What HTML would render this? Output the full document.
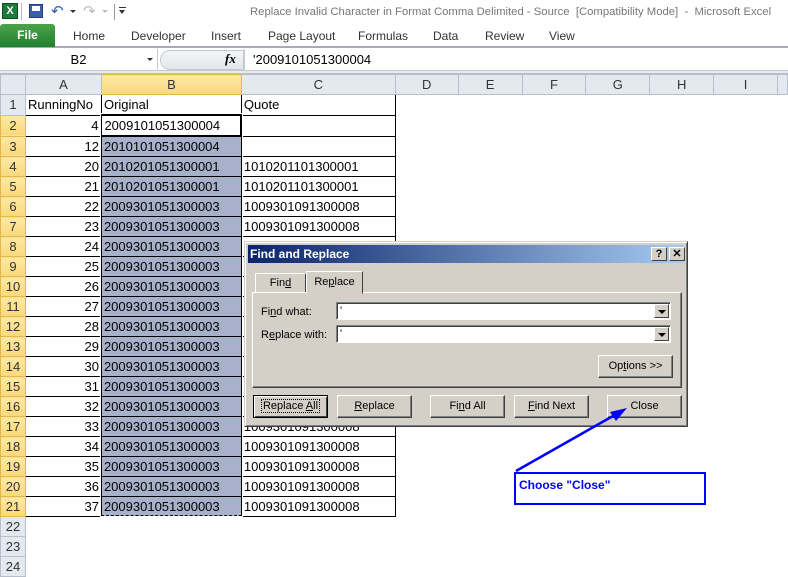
<!DOCTYPE html>
<html><head><meta charset="utf-8"><style>
*{margin:0;padding:0;box-sizing:border-box}
body{width:788px;height:569px;overflow:hidden;background:#fff;font-family:"Liberation Sans",sans-serif;position:relative}
.abs{position:absolute}
#grid{position:absolute;left:0;top:74px;border-collapse:collapse;table-layout:fixed;font-size:13px}
#grid td{height:20px;padding:0 2px;white-space:nowrap;overflow:hidden;line-height:19px}
#grid tr.h td{background:#e4e8ef;border:1px solid #b7bfcc;text-align:center;color:#333;font-size:13px}
#grid td.rh{background:#e4e8ef;border:1px solid #b7bfcc;text-align:center;color:#333}
#grid td.rs{background:linear-gradient(#fde9a4,#f9d87a);border:1px solid #e2b84f;color:#333;text-align:center}
#grid td.c{border:1px solid #000}
#grid td.n{text-align:right}
#grid td.s{background:#a7b1c9}
.btn{position:absolute;height:23px;background:#d4d0c8;border:1px solid;border-color:#fff #404040 #404040 #fff;box-shadow:inset -1px -1px #808080;font-size:11px;text-align:center;line-height:21px;color:#000}
.inp{position:absolute;height:18px;background:#fff;border:1px solid;border-color:#808080 #fff #fff #808080;box-shadow:inset 1px 1px #404040;font-size:11px;padding-left:3px;line-height:16px}
.dd{position:absolute;right:1px;top:1px;width:15px;height:14px;background:#d4d0c8;border:1px solid;border-color:#fff #404040 #404040 #fff}
.dd:after{content:"";position:absolute;left:3px;top:5px;border-left:4px solid transparent;border-right:4px solid transparent;border-top:4px solid #000}
</style></head><body>
<div class="abs" style="left:0;top:0;width:788px;height:24px;background:#fff"></div>
<div class="abs" style="left:2px;top:3px;width:16px;height:16px;background:#1e7a3a;border:1px solid #0d4f22;color:#fff;font-size:11px;font-weight:bold;text-align:center;line-height:14px">X</div>
<div class="abs" style="left:21px;top:3px;width:1px;height:17px;background:#bbb"></div>
<div class="abs" style="left:29px;top:4px;width:14px;height:14px;background:#3c5fa8;border:1px solid #23407a"><div style="margin:1px 2px;height:5px;background:#fff"></div></div>
<div class="abs" style="left:51px;top:2px;font-size:15px;color:#2d5bb0">&#8630;</div>
<div class="abs" style="left:70px;top:10px;border-left:3px solid transparent;border-right:3px solid transparent;border-top:3px solid #333"></div>
<div class="abs" style="left:83px;top:2px;font-size:15px;color:#bbb">&#8631;</div>
<div class="abs" style="left:102px;top:10px;border-left:3px solid transparent;border-right:3px solid transparent;border-top:3px solid #bbb"></div>
<div class="abs" style="left:114px;top:4px;width:1px;height:16px;background:#999"></div>
<div class="abs" style="left:119px;top:7px;width:7px;height:1px;background:#333"></div>
<div class="abs" style="left:119px;top:10px;border-left:3.5px solid transparent;border-right:3.5px solid transparent;border-top:4px solid #333"></div>
<div class="abs" style="left:250px;top:6px;font-size:11.3px;color:#777;white-space:nowrap">Replace Invalid Character in Format Comma Delimited - Source&nbsp; [Compatibility Mode]&nbsp; - &nbsp;Microsoft Excel</div>
<div class="abs" style="left:0;top:24px;width:788px;height:24px;background:#fff;border-bottom:2px solid #a8acb2"></div>
<div class="abs" style="left:0;top:24px;width:55px;height:23px;background:linear-gradient(#4ca24a,#21802f);border-radius:3px 3px 0 0;color:#fff;font-size:12px;font-weight:bold;text-align:center;line-height:23px">File</div>
<div class="abs" style="top:29px;left:73px;font-size:12px;color:#333">Home</div>
<div class="abs" style="top:29px;left:131px;font-size:12px;color:#333">Developer</div>
<div class="abs" style="top:29px;left:211px;font-size:12px;color:#333">Insert</div>
<div class="abs" style="top:29px;left:268px;font-size:12px;color:#333">Page Layout</div>
<div class="abs" style="top:29px;left:358px;font-size:12px;color:#333">Formulas</div>
<div class="abs" style="top:29px;left:433px;font-size:12px;color:#333">Data</div>
<div class="abs" style="top:29px;left:485px;font-size:12px;color:#333">Review</div>
<div class="abs" style="top:29px;left:549px;font-size:12px;color:#333">View</div>
<div class="abs" style="left:0;top:49px;width:788px;height:22px;background:#fff;border-bottom:1px solid #c5c9cf"></div>
<div class="abs" style="left:0;top:49px;width:158px;height:21px;border-right:1px solid #c5c9cf;font-size:13px;text-align:center;line-height:21px;color:#000">B2</div>
<div class="abs" style="left:147px;top:58px;border-left:3px solid transparent;border-right:3px solid transparent;border-top:3px solid #333"></div>
<div class="abs" style="left:160px;top:50px;width:84px;height:20px;background:linear-gradient(#f4f5f7,#e3e6ea);border-radius:10px 0 0 10px;border:1px solid #c5c9cf"></div>
<div class="abs" style="left:225px;top:51px;font-family:'Liberation Serif',serif;font-style:italic;font-weight:bold;font-size:13px">fx</div>
<div class="abs" style="left:244px;top:49px;width:1px;height:21px;background:#c5c9cf"></div>
<div class="abs" style="left:253px;top:52px;font-size:13px">'2009101051300004</div>
<div class="abs" style="left:0;top:71px;width:788px;height:3px;background:#e8eaee;border-bottom:1px solid #b7bfcc"></div>
<table id="grid">
<colgroup><col style="width:25px"><col style="width:76px"><col style="width:140px"><col style="width:154px"><col style="width:63px"><col style="width:64px"><col style="width:64px"><col style="width:64px"><col style="width:64px"><col style="width:64px"><col style="width:10px"></colgroup>
<tr class="h"><td></td><td>A</td><td style="background:linear-gradient(#fde9a4,#f9d87a);border-color:#e2b84f">B</td><td>C</td><td>D</td><td>E</td><td>F</td><td>G</td><td>H</td><td>I</td><td></td></tr>
<tr><td class="rh">1</td><td class="c">RunningNo</td><td class="c">Original</td><td class="c">Quote</td><td></td><td></td><td></td><td></td><td></td><td></td><td></td></tr>
<tr><td class="rs">2</td><td class="c n">4</td><td class="c" style="border:2px solid #000">2009101051300004</td><td class="c"></td><td colspan="8"></td></tr>
<tr><td class="rs">3</td><td class="c n">12</td><td class="c s">2010101051300004</td><td class="c"></td><td colspan="8"></td></tr>
<tr><td class="rs">4</td><td class="c n">20</td><td class="c s">2010201051300001</td><td class="c">1010201101300001</td><td colspan="8"></td></tr>
<tr><td class="rs">5</td><td class="c n">21</td><td class="c s">2010201051300001</td><td class="c">1010201101300001</td><td colspan="8"></td></tr>
<tr><td class="rs">6</td><td class="c n">22</td><td class="c s">2009301051300003</td><td class="c">1009301091300008</td><td colspan="8"></td></tr>
<tr><td class="rs">7</td><td class="c n">23</td><td class="c s">2009301051300003</td><td class="c">1009301091300008</td><td colspan="8"></td></tr>
<tr><td class="rs">8</td><td class="c n">24</td><td class="c s">2009301051300003</td><td class="c">1009301091300008</td><td colspan="8"></td></tr>
<tr><td class="rs">9</td><td class="c n">25</td><td class="c s">2009301051300003</td><td class="c">1009301091300008</td><td colspan="8"></td></tr>
<tr><td class="rs">10</td><td class="c n">26</td><td class="c s">2009301051300003</td><td class="c">1009301091300008</td><td colspan="8"></td></tr>
<tr><td class="rs">11</td><td class="c n">27</td><td class="c s">2009301051300003</td><td class="c">1009301091300008</td><td colspan="8"></td></tr>
<tr><td class="rs">12</td><td class="c n">28</td><td class="c s">2009301051300003</td><td class="c">1009301091300008</td><td colspan="8"></td></tr>
<tr><td class="rs">13</td><td class="c n">29</td><td class="c s">2009301051300003</td><td class="c">1009301091300008</td><td colspan="8"></td></tr>
<tr><td class="rs">14</td><td class="c n">30</td><td class="c s">2009301051300003</td><td class="c">1009301091300008</td><td colspan="8"></td></tr>
<tr><td class="rs">15</td><td class="c n">31</td><td class="c s">2009301051300003</td><td class="c">1009301091300008</td><td colspan="8"></td></tr>
<tr><td class="rs">16</td><td class="c n">32</td><td class="c s">2009301051300003</td><td class="c">1009301091300008</td><td colspan="8"></td></tr>
<tr><td class="rs">17</td><td class="c n">33</td><td class="c s">2009301051300003</td><td class="c">1009301091300008</td><td colspan="8"></td></tr>
<tr><td class="rs">18</td><td class="c n">34</td><td class="c s">2009301051300003</td><td class="c">1009301091300008</td><td colspan="8"></td></tr>
<tr><td class="rs">19</td><td class="c n">35</td><td class="c s">2009301051300003</td><td class="c">1009301091300008</td><td colspan="8"></td></tr>
<tr><td class="rs">20</td><td class="c n">36</td><td class="c s">2009301051300003</td><td class="c">1009301091300008</td><td colspan="8"></td></tr>
<tr><td class="rs">21</td><td class="c n">37</td><td class="c s">2009301051300003</td><td class="c">1009301091300008</td><td colspan="8"></td></tr>
<tr><td class="rh">22</td><td colspan="10"></td></tr>
<tr><td class="rh">23</td><td colspan="10"></td></tr>
<tr><td class="rh">24</td><td colspan="10"></td></tr>
</table>
<div class="abs" style="left:101px;top:114px;width:141px;height:402px;border:1px dashed #000;outline:1px solid #fff;pointer-events:none"></div>
<div class="abs" style="left:244px;top:241px;width:444px;height:186px;background:#d4d0c8;border:1px solid;border-color:#d4d0c8 #404040 #404040 #d4d0c8;box-shadow:inset 1px 1px #fff,inset -1px -1px #808080">
 <div class="abs" style="left:3px;top:3px;width:436px;height:18px;background:linear-gradient(90deg,#0a246a,#a6caf0);color:#fff;font-weight:bold;font-size:12px;line-height:18px;padding-left:2px">Find and Replace</div>
 <div class="abs" style="left:406px;top:5px;width:16px;height:14px;background:#d4d0c8;border:1px solid;border-color:#fff #404040 #404040 #fff;font-size:11px;font-weight:bold;text-align:center;line-height:12px">?</div>
 <div class="abs" style="left:424px;top:5px;width:16px;height:14px;background:#d4d0c8;border:1px solid;border-color:#fff #404040 #404040 #fff;font-size:11px;font-weight:bold;text-align:center;line-height:12px">✕</div>
 <div class="abs" style="left:10px;top:31px;width:51px;height:20px;border:1px solid;border-color:#fff #404040 transparent #fff;font-size:11px;text-align:center;line-height:18px">Fin<u>d</u></div>
 <div class="abs" style="left:7px;top:50px;width:430px;height:96px;border:1px solid;border-color:#fff #404040 #404040 #fff;box-shadow:inset -1px -1px #808080"></div>
 <div class="abs" style="left:61px;top:29px;width:57px;height:23px;background:#d4d0c8;border:1px solid;border-color:#fff #404040 transparent #fff;font-size:11px;text-align:center;line-height:20px">Re<u>p</u>lace</div>
 <div class="abs" style="left:16px;top:64px;font-size:11px">Fi<u>n</u>d what:</div>
 <div class="inp" style="left:91px;top:60px;width:335px">'<div class="dd"></div></div>
 <div class="abs" style="left:16px;top:87px;font-size:11px">R<u>e</u>place with:</div>
 <div class="inp" style="left:91px;top:83px;width:335px">'<div class="dd"></div></div>
 <div class="btn" style="left:353px;top:113px;width:75px">Op<u>t</u>ions &gt;&gt;</div>
 <div class="btn" style="left:8px;top:153px;width:75px;border:1px solid #000;box-shadow:inset 1px 1px #fff,inset -1px -1px #404040"><span style="outline:1px dotted #000;padding:0 1px">Replace <u>A</u>ll</span></div>
 <div class="btn" style="left:92px;top:153px;width:75px"><u>R</u>eplace</div>
 <div class="btn" style="left:185px;top:153px;width:75px">Fi<u>n</u>d All</div>
 <div class="btn" style="left:269px;top:153px;width:75px"><u>F</u>ind Next</div>
 <div class="btn" style="left:362px;top:153px;width:75px">Close</div>
</div>
<svg class="abs" style="left:0;top:0" width="788" height="569">
<line x1="516" y1="471" x2="620" y2="412" stroke="#0000ff" stroke-width="2.5"/>
<polygon points="627,408 610,412 616,421" fill="#0000ff"/>
</svg>
<div class="abs" style="left:514px;top:472px;width:192px;height:33px;border:2px solid #0000ff;background:#fff;color:#0000ff;font-weight:bold;font-size:12px;padding:4px 0 0 3px">Choose "Close"</div>
</body></html>
